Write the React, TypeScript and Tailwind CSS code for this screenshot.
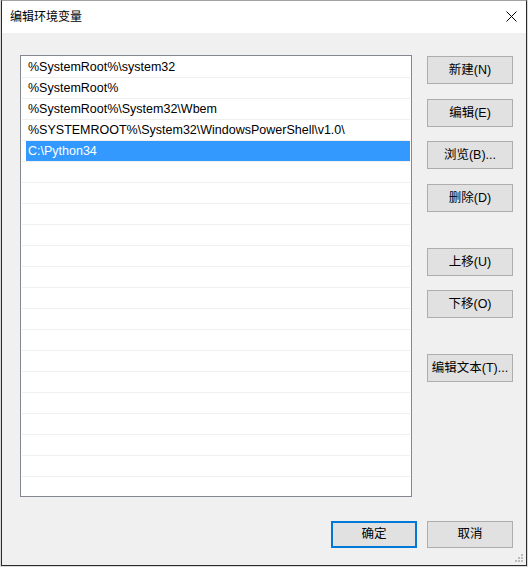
const paths = [
    "%SystemRoot%\\system32",
    "%SystemRoot%",
    "%SystemRoot%\\System32\\Wbem",
    "%SYSTEMROOT%\\System32\\WindowsPowerShell\\v1.0\\",
    "C:\\Python34",
];

const selected = 4;
const rowCount = 21;

function SideButton({ label, className = "" }: { label: string; className?: string }) {
    return (
        <button className={`w-[86px] h-[28px] bg-[#e1e1e1] border border-[#adadad] text-black text-[12.5px] leading-none ${className}`}>
            {label}
        </button>
    );
}

export default function App() {
    const rows = Array.from({ length: rowCount }, (_, i) => paths[i] ?? "");

    return (
        <div
            className="w-[528px] h-[567px] bg-[#d9d9d9] pl-px overflow-hidden"
            style={{ fontFamily: "'Liberation Sans', 'Noto Sans CJK SC', sans-serif" }}
        >
            <div className="relative w-[526px] h-[566px] border border-[#2b2b2b] border-t-[#a3a3a3] bg-[#f0f0f0] flex flex-col">

                {/* title bar */}
                <div className="h-[32px] bg-white flex items-center justify-between pl-[8px] pr-[9px]">
                    <span className="text-[12px] text-black">编辑环境变量</span>
                    <svg width="11" height="11" viewBox="0 0 11 11" className="mt-[-1px]">
                        <path d="M0.5 0.5 L10.5 10.5 M10.5 0.5 L0.5 10.5" stroke="#000" strokeWidth="1" fill="none" />
                    </svg>
                </div>

                <div className="flex pt-[22px] pl-[18px]">

                    {/* path list */}
                    <div className="w-[392px] h-[442px] bg-white border border-[#828790] pt-px px-px overflow-hidden">
                        {rows.map((text, i) => (
                            <div key={i} className="h-[21px] border-b border-[#efefef] pl-[4px]">
                                <div
                                    className={`h-full pl-[2px] pt-px flex items-center text-[12.5px] whitespace-nowrap ${i === selected ? "bg-[#3399ff] text-white" : "text-black"
                                        }`}
                                >
                                    {text}
                                </div>
                            </div>
                        ))}
                    </div>

                    <div className="flex flex-col ml-[15px] mt-px">
                        <SideButton label="新建(N)" />
                        <SideButton label="编辑(E)" className="mt-[15px]" />
                        <SideButton label="浏览(B)..." className="mt-[14px]" />
                        <SideButton label="删除(D)" className="mt-[15px]" />
                        <SideButton label="上移(U)" className="mt-[36px]" />
                        <SideButton label="下移(O)" className="mt-[14px]" />
                        <SideButton label="编辑文本(T)..." className="mt-[36px]" />
                    </div>
                </div>

                {/* dialog buttons */}
                <div className="flex justify-end gap-[10px] pr-[13px] mt-[24px]">
                    <button className="w-[86px] h-[27px] bg-[#e1e1e1] border-2 border-[#0078d7] text-black text-[12.5px] leading-none">
                        确定
                    </button>
                    <button className="w-[86px] h-[27px] bg-[#e1e1e1] border border-[#adadad] text-black text-[12.5px] leading-none">
                        取消
                    </button>
                </div>

                {/* size grip */}
                <svg width="9" height="9" viewBox="0 0 9 9" className="absolute right-[2px] bottom-[2px]">
                    <rect x="6" y="0" width="2" height="2" fill="#bcbcbc" />
                    <rect x="3" y="3" width="2" height="2" fill="#bcbcbc" />
                    <rect x="6" y="3" width="2" height="2" fill="#bcbcbc" />
                    <rect x="0" y="6" width="2" height="2" fill="#bcbcbc" />
                    <rect x="3" y="6" width="2" height="2" fill="#bcbcbc" />
                    <rect x="6" y="6" width="2" height="2" fill="#bcbcbc" />
                </svg>
            </div>
        </div>
    );
}
